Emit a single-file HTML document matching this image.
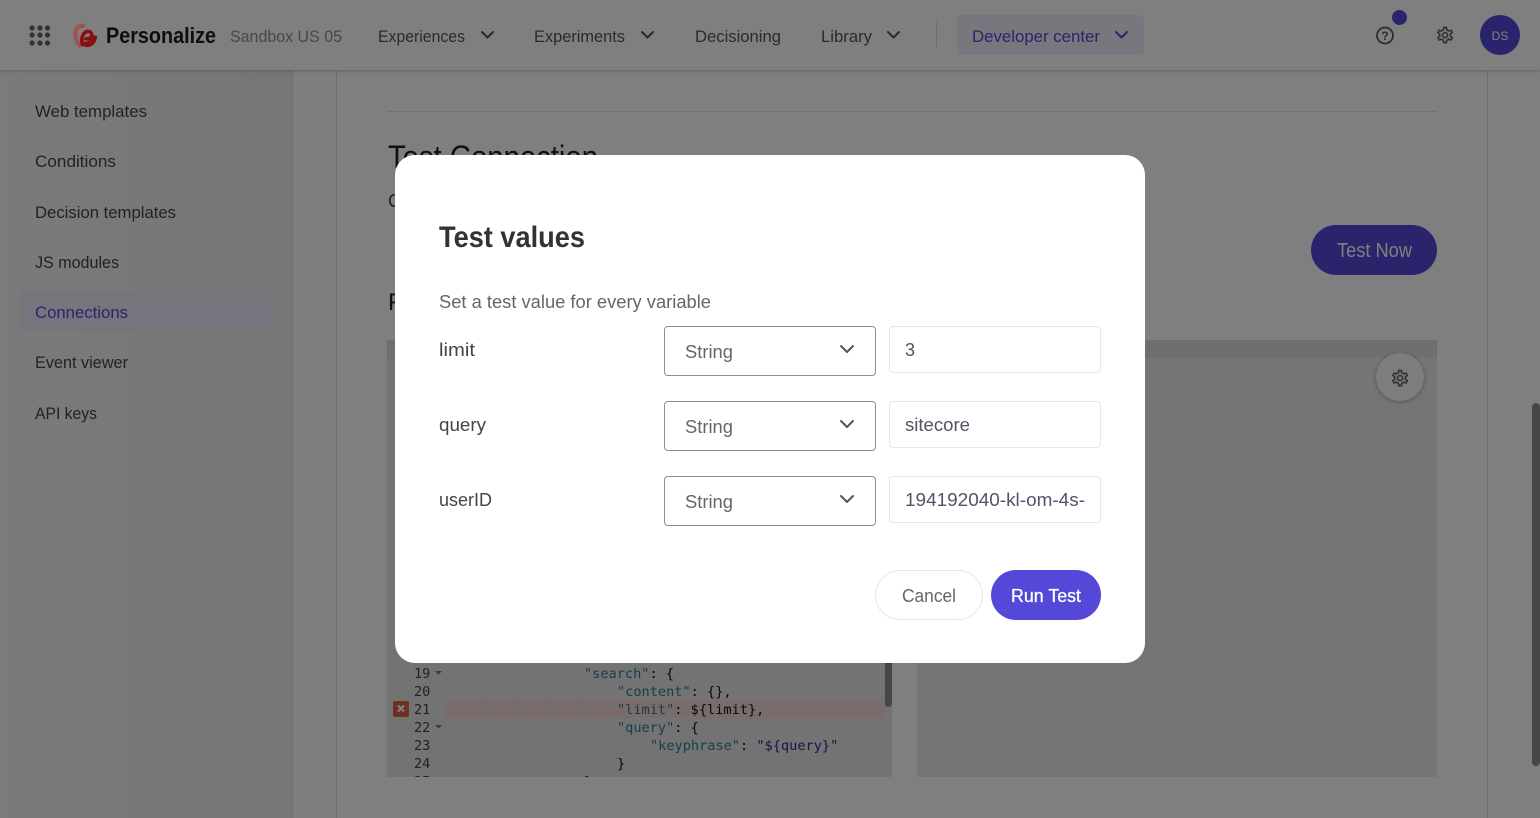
<!DOCTYPE html>
<html lang="en">
<head>
<meta charset="utf-8">
<title>Test values</title>
<style>
html,body{margin:0;padding:0;width:1540px;height:818px;overflow:hidden;background:#fff}
body{position:relative;font-family:"Liberation Sans",sans-serif}
.a{position:absolute;box-sizing:border-box}
svg.l{position:absolute;left:0;top:0;width:1540px;height:818px}
text{font-family:"Liberation Sans",sans-serif}
.m text{font-family:"DejaVu Sans Mono",monospace;font-size:13.6px}
.k{fill:#2f7f93}.p{fill:#111}.s{fill:#2a2a9c}.n{fill:#444}
.nav{font-size:17px;fill:#555}
.side{font-size:17px;fill:#444}
.mt{font-size:18px;fill:#555}
.chev{fill:none;stroke-width:2;stroke-linecap:round;stroke-linejoin:round}
</style>
</head>
<body>
<!-- base page -->
<div class="a" style="left:0;top:0;width:293px;height:818px;background:linear-gradient(90deg,#f6f6f6,#ececec);border-right:1px solid #e2e2e2"></div>
<div class="a" style="left:293px;top:0;width:44px;height:818px;background:#fcfcfc;border-right:1px solid #e2e2e2"></div>
<div class="a" style="left:1487px;top:0;width:1px;height:818px;background:#e2e2e2"></div>
<div class="a" style="left:387px;top:111px;width:1050px;height:1px;background:#e2e2e2"></div>
<div class="a" style="left:20px;top:291px;width:252px;height:40px;border-radius:6px;background:#ecebfa"></div>
<!-- panels -->
<div class="a" style="left:387px;top:340px;width:505px;height:437px;background:#e6e6e6;overflow:hidden">
  <div class="a" style="left:0;top:0;width:505px;height:18px;background:#dedede"></div>
  <div class="a" style="left:58px;top:360px;width:440px;height:18px;background:#f7d9d9"></div>
  <div class="a" style="left:96px;top:320px;width:0;height:117px;border-left:1px dotted #d6d6d6"></div>
  <div class="a" style="left:129px;top:320px;width:0;height:117px;border-left:1px dotted #d6d6d6"></div>
  <div class="a" style="left:162px;top:320px;width:0;height:117px;border-left:1px dotted #d6d6d6"></div>
  <div class="a" style="left:196px;top:342px;width:0;height:95px;border-left:1px dotted #d6d6d6"></div>
  <div class="a" style="left:229px;top:401px;width:0;height:18px;border-left:1px dotted #d6d6d6"></div>
  <div class="a" style="left:498px;top:0;width:7px;height:367px;border-radius:4px;background:#8c8c8c"></div>
  <div class="a" style="left:6px;top:361px;width:16px;height:16px;border-radius:2px;background:#d9604a"></div>
</div>
<div class="a" style="left:917px;top:340px;width:520px;height:437px;background:#ebebeb">
  <div class="a" style="left:0;top:0;width:520px;height:18px;background:#dfdfdf"></div>
</div>
<div class="a" style="left:1376px;top:353px;width:48px;height:48px;border-radius:50%;background:#fafafa;box-shadow:0 1px 5px rgba(0,0,0,.3)"></div>
<div class="a" style="left:1311px;top:225px;width:126px;height:50px;border-radius:25px;background:#5548d9"></div>
<div class="a" style="left:1532px;top:403px;width:8px;height:363px;border-radius:4px;background:#8c8c8c"></div>

<svg class="l" viewBox="0 0 1540 818">
  <text x="35" y="117" class="side" textLength="112" lengthAdjust="spacingAndGlyphs">Web templates</text>
  <text x="35" y="167" class="side" textLength="81" lengthAdjust="spacingAndGlyphs">Conditions</text>
  <text x="35" y="218" class="side" textLength="141" lengthAdjust="spacingAndGlyphs">Decision templates</text>
  <text x="35" y="268" class="side" textLength="84" lengthAdjust="spacingAndGlyphs">JS modules</text>
  <text x="35" y="318" class="side" style="fill:#5548d9" textLength="93" lengthAdjust="spacingAndGlyphs">Connections</text>
  <text x="35" y="368" class="side" textLength="93" lengthAdjust="spacingAndGlyphs">Event viewer</text>
  <text x="35" y="419" class="side" textLength="62" lengthAdjust="spacingAndGlyphs">API keys</text>
  <text x="388" y="168" font-size="32" fill="#222" textLength="210" lengthAdjust="spacingAndGlyphs">Test Connection</text>
  <text x="388" y="207" font-size="18" fill="#444">C</text>
  <text x="388" y="310" font-size="24" fill="#222">F</text>
  <text x="1337" y="257" font-size="20" fill="#fff" textLength="75" lengthAdjust="spacingAndGlyphs">Test Now</text>
  <g transform="translate(1390,368) scale(.84)"><path fill="#666" d="M12,8A4,4 0 0,1 16,12A4,4 0 0,1 12,16A4,4 0 0,1 8,12A4,4 0 0,1 12,8M12,10A2,2 0 0,0 10,12A2,2 0 0,0 12,14A2,2 0 0,0 14,12A2,2 0 0,0 12,10M10,22C9.75,22 9.54,21.82 9.5,21.58L9.13,18.93C8.5,18.68 7.96,18.34 7.44,17.94L4.95,18.95C4.73,19.03 4.46,18.95 4.34,18.73L2.34,15.27C2.21,15.05 2.27,14.78 2.46,14.63L4.57,12.97L4.5,12L4.57,11L2.46,9.37C2.27,9.22 2.21,8.95 2.34,8.73L4.34,5.27C4.46,5.05 4.73,4.96 4.95,5.05L7.44,6.05C7.96,5.66 8.5,5.32 9.13,5.07L9.5,2.42C9.54,2.18 9.75,2 10,2H14C14.25,2 14.46,2.18 14.5,2.42L14.87,5.07C15.5,5.32 16.04,5.66 16.56,6.05L19.05,5.05C19.27,4.96 19.54,5.05 19.66,5.27L21.66,8.73C21.79,8.95 21.73,9.22 21.54,9.37L19.43,11L19.5,12L19.43,13L21.54,14.63C21.73,14.78 21.79,15.05 21.66,15.27L19.66,18.73C19.54,18.95 19.27,19.04 19.05,18.95L16.56,17.95C16.04,18.34 15.5,18.68 14.87,18.93L14.5,21.58C14.46,21.82 14.25,22 14,22H10M11.25,4L10.88,6.61C9.68,6.86 8.62,7.5 7.85,8.39L5.44,7.35L4.69,8.65L6.8,10.2C6.4,11.37 6.4,12.64 6.8,13.8L4.68,15.36L5.43,16.66L7.86,15.62C8.63,16.5 9.68,17.14 10.87,17.38L11.24,20H12.76L13.13,17.39C14.32,17.14 15.37,16.5 16.14,15.62L18.57,16.66L19.32,15.36L17.2,13.81C17.6,12.64 17.6,11.37 17.2,10.2L19.31,8.65L18.56,7.35L16.15,8.39C15.38,7.5 14.32,6.86 13.12,6.62L12.75,4H11.25Z"/></g>
  <!-- code -->
  <svg x="387" y="340" width="505" height="437" viewBox="387 340 505 437" class="m">
    <text x="414" y="678" class="n">19</text>
    <text x="414" y="696" class="n">20</text>
    <text x="414" y="714" class="n">21</text>
    <text x="414" y="732" class="n">22</text>
    <text x="414" y="750" class="n">23</text>
    <text x="414" y="768" class="n">24</text>
    <text x="414" y="786" class="n">25</text>
    <path d="M435 671h7l-3.500 3.500zM435 725h7l-3.500 3.500z" fill="#777"/>
    <path d="M398 705.500l6 6m0-6l-6 6" stroke="#fff" stroke-width="2.200"/>
    <text x="584" y="678" xml:space="preserve"><tspan class="k">"search"</tspan><tspan class="p">: {</tspan></text>
    <text x="617" y="696" xml:space="preserve"><tspan class="k">"content"</tspan><tspan class="p">: {},</tspan></text>
    <text x="617" y="714" xml:space="preserve"><tspan class="k">"limit"</tspan><tspan class="p">: ${limit},</tspan></text>
    <text x="617" y="732" xml:space="preserve"><tspan class="k">"query"</tspan><tspan class="p">: {</tspan></text>
    <text x="650" y="750" xml:space="preserve"><tspan class="k">"keyphrase"</tspan><tspan class="p">: </tspan><tspan class="s">"${query}"</tspan></text>
    <text x="617" y="768" class="p">}</text>
    <text x="584" y="786" class="p">}</text>
  </svg>
</svg>

<!-- header -->
<div class="a" style="left:0;top:0;width:1540px;height:70px;background:#fff;box-shadow:0 1px 3px rgba(0,0,0,.22)"></div>
<div class="a" style="left:957px;top:15px;width:187px;height:40px;border-radius:4px;background:#f0eefb"></div>
<div class="a" style="left:1392px;top:10px;width:15px;height:15px;border-radius:50%;background:#5548d9"></div>
<div class="a" style="left:1480px;top:15px;width:40px;height:40px;border-radius:50%;background:#5548d9"></div>
<div class="a" style="left:936px;top:22px;width:1px;height:25px;background:#d8d8d8"></div>
<svg class="l" viewBox="0 0 1540 818">
  <g fill="#666">
    <circle cx="32" cy="28" r="2.600"/><circle cx="40" cy="28" r="2.600"/><circle cx="47.500" cy="28" r="2.600"/>
    <circle cx="32" cy="35" r="2.600"/><circle cx="40" cy="35" r="2.600"/><circle cx="47.500" cy="35" r="2.600"/>
    <circle cx="32" cy="43" r="2.600"/><circle cx="40" cy="43" r="2.600"/><circle cx="47.500" cy="43" r="2.600"/>
  </g>
  <text x="106" y="43" font-size="22" font-weight="700" fill="#1c1c1c" textLength="110" lengthAdjust="spacingAndGlyphs">Personalize</text>
  <text x="230" y="42" font-size="17" fill="#909090" textLength="112" lengthAdjust="spacingAndGlyphs">Sandbox US 05</text>
  <text x="378" y="42" class="nav" textLength="87" lengthAdjust="spacingAndGlyphs">Experiences</text>
  <text x="534" y="42" class="nav" textLength="91" lengthAdjust="spacingAndGlyphs">Experiments</text>
  <text x="695" y="42" class="nav" textLength="86" lengthAdjust="spacingAndGlyphs">Decisioning</text>
  <text x="821" y="42" class="nav" textLength="51" lengthAdjust="spacingAndGlyphs">Library</text>
  <text x="972" y="42" class="nav" style="fill:#5548d9" textLength="128" lengthAdjust="spacingAndGlyphs">Developer center</text>
  <g class="chev" stroke="#555">
    <path d="M482 32l5.500 5.500 5.500-5.500"/>
    <path d="M642 32l5.500 5.500 5.500-5.500"/>
    <path d="M888 32l5.500 5.500 5.500-5.500"/>
  </g>
  <path class="chev" stroke="#5548d9" d="M1116 32l5.500 5.500 5.500-5.500"/>
  <circle cx="1385" cy="35.500" r="8" fill="none" stroke="#555" stroke-width="1.700"/>
  <text x="1385" y="40" font-size="12" font-weight="700" fill="#555" text-anchor="middle">?</text>
  <g transform="translate(1435,25) scale(.84)"><path fill="#666" d="M12,8A4,4 0 0,1 16,12A4,4 0 0,1 12,16A4,4 0 0,1 8,12A4,4 0 0,1 12,8M12,10A2,2 0 0,0 10,12A2,2 0 0,0 12,14A2,2 0 0,0 14,12A2,2 0 0,0 12,10M10,22C9.75,22 9.54,21.82 9.5,21.58L9.13,18.93C8.5,18.68 7.96,18.34 7.44,17.94L4.95,18.95C4.73,19.03 4.46,18.95 4.34,18.73L2.34,15.27C2.21,15.05 2.27,14.78 2.46,14.63L4.57,12.97L4.5,12L4.57,11L2.46,9.37C2.27,9.22 2.21,8.95 2.34,8.73L4.34,5.27C4.46,5.05 4.73,4.96 4.95,5.05L7.44,6.05C7.96,5.66 8.5,5.32 9.13,5.07L9.5,2.42C9.54,2.18 9.75,2 10,2H14C14.25,2 14.46,2.18 14.5,2.42L14.87,5.07C15.5,5.32 16.04,5.66 16.56,6.05L19.05,5.05C19.27,4.96 19.54,5.05 19.66,5.27L21.66,8.73C21.79,8.95 21.73,9.22 21.54,9.37L19.43,11L19.5,12L19.43,13L21.54,14.63C21.73,14.78 21.79,15.05 21.66,15.27L19.66,18.73C19.54,18.95 19.27,19.04 19.05,18.95L16.56,17.95C16.04,18.34 15.5,18.68 14.87,18.93L14.5,21.58C14.46,21.82 14.25,22 14,22H10M11.25,4L10.88,6.61C9.68,6.86 8.62,7.5 7.85,8.39L5.44,7.35L4.69,8.65L6.8,10.2C6.4,11.37 6.4,12.64 6.8,13.8L4.68,15.36L5.43,16.66L7.86,15.62C8.63,16.5 9.68,17.14 10.87,17.38L11.24,20H12.76L13.13,17.39C14.32,17.14 15.37,16.5 16.14,15.62L18.57,16.66L19.32,15.36L17.2,13.81C17.6,12.64 17.6,11.37 17.2,10.2L19.31,8.65L18.56,7.35L16.15,8.39C15.38,7.5 14.32,6.86 13.12,6.62L12.75,4H11.25Z"/></g>
  <text x="1500" y="40" font-size="12" fill="#fff" text-anchor="middle">DS</text>
</svg>

<!-- overlay -->
<div class="a" style="left:0;top:0;width:1540px;height:818px;background:rgba(0,0,0,.5)"></div>

<!-- logo above overlay -->
<svg class="a" style="left:70px;top:20px" width="30" height="30" viewBox="70 20 30 30">
  <path d="M85 26C78 24.500 74.500 30 75.500 36.500C76 40.500 78 44 81 46.500" fill="none" stroke="#9a5550" stroke-width="4.200"/>
  <path d="M83 46C80.500 40 82 33 87 31.500C92 30.500 93.500 36.500 89 38.500C87.500 39.200 86 39 84.500 38" fill="none" stroke="#861010" stroke-width="3.600"/>
  <path d="M82 45.500C89 49.500 96.500 45.500 97.200 36L92 34.800C91 40 88 42.500 84 41.500Z" fill="#861010"/>
</svg>

<!-- modal -->
<div class="a" style="left:395px;top:155px;width:750px;height:508px;background:#fff;border-radius:20px"></div>
<div class="a" style="left:664px;top:326px;width:212px;height:50px;border:1px solid #8e8e8e;border-radius:4px"></div>
<div class="a" style="left:664px;top:401px;width:212px;height:50px;border:1px solid #8e8e8e;border-radius:4px"></div>
<div class="a" style="left:664px;top:476px;width:212px;height:50px;border:1px solid #8e8e8e;border-radius:4px"></div>
<div class="a" style="left:889px;top:326px;width:212px;height:47px;border:1px solid #e6e6e6;border-radius:4px"></div>
<div class="a" style="left:889px;top:401px;width:212px;height:47px;border:1px solid #e6e6e6;border-radius:4px"></div>
<div class="a" style="left:889px;top:476px;width:212px;height:47px;border:1px solid #e6e6e6;border-radius:4px"></div>
<div class="a" style="left:875px;top:570px;width:108px;height:50px;border:1px solid #e6e6e6;border-radius:25px"></div>
<div class="a" style="left:991px;top:570px;width:110px;height:50px;background:#5548d9;border-radius:25px"></div>
<svg class="l" viewBox="0 0 1540 818">
  <text x="439" y="247" font-size="30" font-weight="700" fill="#333" textLength="146" lengthAdjust="spacingAndGlyphs">Test values</text>
  <text x="439" y="308" class="mt" style="fill:#666" textLength="272" lengthAdjust="spacingAndGlyphs">Set a test value for every variable</text>
  <text x="439" y="356" class="mt" style="fill:#444" textLength="36" lengthAdjust="spacingAndGlyphs">limit</text>
  <text x="439" y="431" class="mt" style="fill:#444" textLength="47" lengthAdjust="spacingAndGlyphs">query</text>
  <text x="439" y="506" class="mt" style="fill:#444" textLength="53" lengthAdjust="spacingAndGlyphs">userID</text>
  <text x="685" y="358" class="mt" style="fill:#666" textLength="48" lengthAdjust="spacingAndGlyphs">String</text>
  <text x="685" y="433" class="mt" style="fill:#666" textLength="48" lengthAdjust="spacingAndGlyphs">String</text>
  <text x="685" y="508" class="mt" style="fill:#666" textLength="48" lengthAdjust="spacingAndGlyphs">String</text>
  <g class="chev" stroke="#555">
    <path d="M841 346l6 6 6-6"/>
    <path d="M841 421l6 6 6-6"/>
    <path d="M841 496l6 6 6-6"/>
  </g>
  <text x="905" y="356" class="mt" style="fill:#4f5566">3</text>
  <text x="905" y="431" class="mt" style="fill:#4f5566" textLength="65" lengthAdjust="spacingAndGlyphs">sitecore</text>
  <text x="905" y="506" class="mt" style="fill:#4f5566" textLength="180" lengthAdjust="spacingAndGlyphs">194192040-kl-om-4s-</text>
  <text x="902" y="602" class="mt" style="fill:#666" textLength="54" lengthAdjust="spacingAndGlyphs">Cancel</text>
  <text x="1011" y="602" class="mt" style="fill:#fff;stroke:#fff;stroke-width:.3" textLength="70" lengthAdjust="spacingAndGlyphs">Run Test</text>
</svg>
</body>
</html>
